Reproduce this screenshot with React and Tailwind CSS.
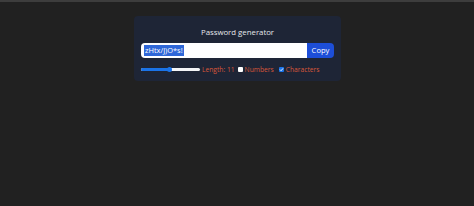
import React from "react";

export default function App() {
  return (
    <div
      className="min-h-screen w-full bg-[#212121] border-t-2 border-[#3d3d3d] pt-[14px]"
      style={{ fontFamily: '"Open Sans", "Noto Sans", sans-serif' }}
    >
      <div className="w-[207px] ml-[134px] bg-[#1e2536] rounded-[4px] px-[7px] pt-[11px] pb-[7px] text-[#d9573a]">
        <h1 className="text-[7.8px] leading-[10px] text-[#e5e7eb] text-center mb-[6px]">
          Password generator
        </h1>
        <div className="flex h-[15px] rounded-[4px] overflow-hidden mb-[7px]">
          <div className="flex-1 bg-white flex items-center pl-[3px]">
            <span className="bg-[#2f67d8] text-white text-[7.4px] leading-[11px] px-[1px]">
              zHtx/J)O*s!
            </span>
          </div>
          <button className="w-[27px] bg-[#1d4ed8] text-white text-[7.6px] leading-[15px] text-center shrink-0">
            Copy
          </button>
        </div>
        <div className="flex items-center h-[9px] text-[6.7px] leading-[9px]">
          <div className="relative w-[59px] h-[9px] flex items-center">
            <div className="w-full h-[3px] rounded-full bg-[#f3f4f6] overflow-hidden flex">
              <div className="w-[29px] h-full bg-[#1a73e8]" />
            </div>
            <div className="absolute left-[26px] top-[2px] w-[5px] h-[5px] rounded-full bg-[#1a73e8]" />
          </div>
          <span className="ml-[2px]">Length: 11</span>
          <div className="ml-[3px] w-[5px] h-[5px] bg-white rounded-[1px]" />
          <span className="ml-[2px]">Numbers</span>
          <div className="ml-[5px] w-[5px] h-[5px] bg-[#1a73e8] rounded-[1px] flex items-center justify-center">
            <svg width="5" height="5" viewBox="0 0 10 10">
              <path d="M2 5.2 L4.2 7.4 L8 2.8" stroke="white" strokeWidth="1.8" fill="none" />
            </svg>
          </div>
          <span className="ml-[2px]">Characters</span>
        </div>
      </div>
    </div>
  );
}
